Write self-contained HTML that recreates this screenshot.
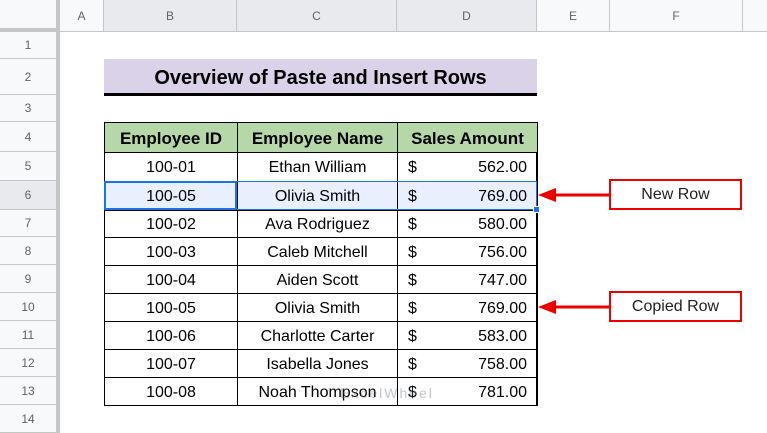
<!DOCTYPE html>
<html><head><style>
*{margin:0;padding:0;box-sizing:border-box}
body{width:767px;height:433px;overflow:hidden;background:#fff;font-family:"Liberation Sans",Arial,sans-serif;position:relative}
.a{position:absolute}
.ch{position:absolute;top:0;height:32px;background:#f8f9fa;border-right:1px solid #c4c7c5;border-bottom:1px solid #c4c7c5;color:#5f6368;font-size:12px;text-align:center;line-height:32px}
.ch.s{background:#e8eaed}
.rh{position:absolute;left:0;width:60px;background:#f8f9fa;border-bottom:1px solid #c4c7c5;border-right:4px solid #c4c7c5;color:#5f6368;font-size:12px;text-align:center}
.c{position:absolute;border:1px solid #000;font-size:16px;color:#000;text-align:center;display:flex;align-items:center;justify-content:center;padding-top:2px}
.d{justify-content:space-between;padding:2px 10px 0 10px}
.h{background:#b6d7a8;font-weight:bold;font-size:17px}
.box{position:absolute;border:2px solid #e00;background:#fff;font-size:16px;text-align:center;color:#222}
</style></head><body>
<div class="ch" style="left:0;width:60px;border-right:4px solid #c4c7c5;border-bottom:4px solid #c4c7c5"></div>
<div class="ch" style="left:60px;width:44px">A</div>
<div class="ch s" style="left:104px;width:133px">B</div>
<div class="ch s" style="left:237px;width:160px">C</div>
<div class="ch s" style="left:397px;width:140px">D</div>
<div class="ch" style="left:537px;width:73px">E</div>
<div class="ch" style="left:610px;width:133px">F</div>
<div class="ch" style="left:743px;width:30px"></div>

<div class="rh" style="top:32px;height:27px;line-height:27px">1</div>
<div class="rh" style="top:59px;height:36px;line-height:36px">2</div>
<div class="rh" style="top:95px;height:27px;line-height:27px">3</div>
<div class="rh" style="top:122px;height:30px;line-height:30px">4</div>
<div class="rh" style="top:152px;height:29px;line-height:29px">5</div>
<div class="rh" style="top:181px;height:29px;line-height:29px;background:#e8eaed">6</div>
<div class="rh" style="top:210px;height:27px;line-height:27px">7</div>
<div class="rh" style="top:237px;height:28px;line-height:28px">8</div>
<div class="rh" style="top:265px;height:28px;line-height:28px">9</div>
<div class="rh" style="top:293px;height:28px;line-height:28px">10</div>
<div class="rh" style="top:321px;height:28px;line-height:28px">11</div>
<div class="rh" style="top:349px;height:28px;line-height:28px">12</div>
<div class="rh" style="top:377px;height:28px;line-height:28px">13</div>
<div class="rh" style="top:405px;height:28px;line-height:28px">14</div>

<div class="a" style="left:104px;top:59px;width:433px;height:37px;background:#d9d2e9;border-bottom:3px solid #000;font-weight:bold;font-size:20px;text-align:center;line-height:38px">Overview of Paste and Insert Rows</div>

<div class="a" style="left:104px;top:122px;width:433px;height:284px;border:1px solid #000"></div>
<script>
var rows=[["Employee ID","Employee Name","Sales Amount"],["100-01","Ethan William","562.00"],["100-05","Olivia Smith","769.00"],["100-02","Ava Rodriguez","580.00"],["100-03","Caleb Mitchell","756.00"],["100-04","Aiden Scott","747.00"],["100-05","Olivia Smith","769.00"],["100-06","Charlotte Carter","583.00"],["100-07","Isabella Jones","758.00"],["100-08","Noah Thompson","781.00"]];
var tops=[122,152,181,210,237,265,293,321,349,377,405];
var xs=[104,237,397,537];var h="";
for(var i=0;i<rows.length;i++){for(var j=0;j<3;j++){var st="left:"+xs[j]+"px;top:"+tops[i]+"px;width:"+(xs[j+1]-xs[j]+1)+"px;height:"+(tops[i+1]-tops[i]+1)+"px;";
if(i==2)st+="background:#e8f0fe;";
var cls="c"+(i==0?" h":"");
if(j==2&&i>0)h+='<div class="'+cls+' d" style="'+st+'"><span>$</span><span>'+rows[i][j]+'</span></div>';
else h+='<div class="'+cls+'" style="'+st+'">'+rows[i][j]+'</div>';}}
document.body.insertAdjacentHTML('beforeend',h);
</script>
<div class="a" style="left:104px;top:181px;width:133px;height:29px;border:2px solid #1a73e8"></div>
<div class="a" style="left:104px;top:181px;width:433px;height:29px;border:1px solid #1a73e8"></div>
<div class="a" style="left:533px;top:206px;width:7px;height:7px;background:#1a73e8;border:1px solid #fff"></div>

<svg class="a" style="left:536px;top:180px" width="80" height="150">
<line x1="18" y1="15" x2="74" y2="15" stroke="#e00" stroke-width="3"/>
<polygon points="2,15 20,8 20,22" fill="#e00"/>
<line x1="18" y1="127" x2="74" y2="127" stroke="#e00" stroke-width="3"/>
<polygon points="2,127 20,120 20,134" fill="#e00"/>
</svg>
<div class="box" style="left:609px;top:179px;width:133px;height:31px;line-height:28px">New Row</div>
<div class="box" style="left:609px;top:291px;width:133px;height:31px;line-height:28px">Copied Row</div>
<div class="a" style="left:340px;top:385px;font-size:14px;letter-spacing:2px;color:rgba(120,130,140,0.45)">ExcelWheel</div>
</body></html>
